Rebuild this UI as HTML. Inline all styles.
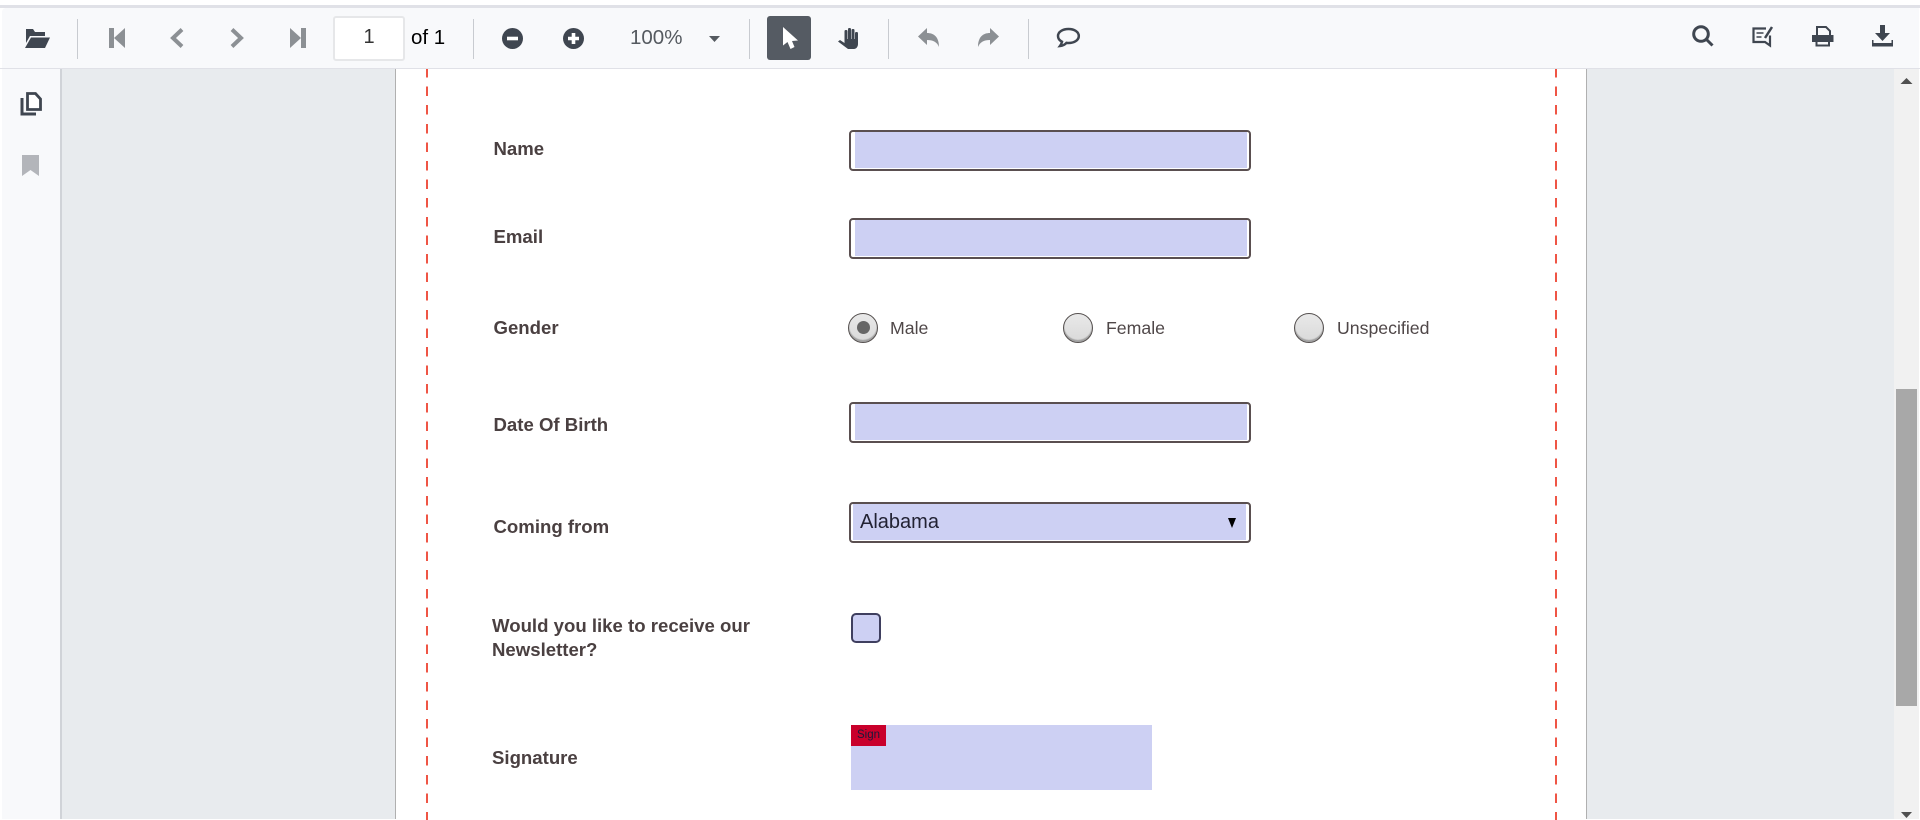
<!DOCTYPE html>
<html><head><meta charset="utf-8"><title>PDF Viewer</title>
<style>
html,body{margin:0;padding:0;width:1920px;height:819px;overflow:hidden;background:#fff;font-family:"Liberation Sans",sans-serif}
.a{position:absolute}
.sep{position:absolute;top:19px;width:1px;height:40px;background:#c8cbd0}
.lb{position:absolute;font-weight:bold;font-size:18.6px;color:#4a4041;line-height:24px;white-space:nowrap}
.rt{position:absolute;font-size:17.700px;color:#4f4748;line-height:20px;white-space:nowrap}
.f{position:absolute;left:849px;width:402px;height:41px;box-sizing:border-box;border:2px solid #5a4f50;border-radius:4px;background:#fff}
.f i{position:absolute;left:4px;right:2px;top:0;bottom:1px;background:#cdd0f3;display:block}
.r{position:absolute;top:313px;width:30px;height:30px;box-sizing:border-box;border-radius:50%;border:1.5px solid #55504f;background:linear-gradient(#e9e9e9,#d9d9d9);box-shadow:inset 0 -2px 1px #a0a0a0}
svg{position:absolute;overflow:visible}
</style></head><body>
<div class="a" style="left:0;top:5px;width:1920px;height:3px;background:#e0e1e7"></div>
<div class="a" style="left:2px;top:8px;width:1917px;height:60px;background:#f8f9fb;border-top-left-radius:4px"></div>
<div class="a" style="left:2px;top:69px;width:58px;height:750px;background:#f8f9fb"></div>
<div class="a" style="left:60px;top:69px;width:2px;height:750px;background:#d0d3d8"></div>
<div class="a" style="left:62px;top:69px;width:1832px;height:750px;background:#e8ebee"></div>
<div class="a" style="left:395px;top:69px;width:1192px;height:750px;background:#fff;border-left:1px solid #b0b0b0;border-right:1px solid #b0b0b0;box-sizing:border-box"></div>
<div class="a" style="left:426px;top:67.500px;width:1.5px;height:752px;background:repeating-linear-gradient(#ef5545 0 9.500px,transparent 9.500px 18.600px)"></div>
<div class="a" style="left:1555px;top:67.500px;width:1.5px;height:752px;background:repeating-linear-gradient(#ef5545 0 9.500px,transparent 9.500px 18.600px)"></div>
<div class="a" style="left:395px;top:66px;width:1192px;height:3px;background:#f8f9fb"></div>
<div class="a" style="left:0;top:68px;width:1920px;height:1px;background:#e0e1e7"></div>
<div class="a" style="left:1894px;top:69px;width:25px;height:750px;background:#f1f1f1"></div>
<div class="a" style="left:1896px;top:389px;width:21px;height:317px;background:#a8a8a8"></div>
<svg style="left:1894px;top:69px" width="25" height="750"><path d="M12.500 9l6 6h-12z" fill="#505050"/><path d="M7 743h11l-5.500 6z" fill="#505050"/></svg>

<div class="sep" style="left:77px"></div><div class="sep" style="left:472.500px;width:1.500px"></div><div class="sep" style="left:748.500px;width:1.500px"></div><div class="sep" style="left:888px"></div><div class="sep" style="left:1027.500px;width:1.500px"></div>

<svg style="left:25px;top:29px" width="25" height="20" fill="#3f4650"><path d="M1 0h7l2 3h10v4H5L1 14z"/><path d="M6 8.500h19L20 19H0z"/></svg>
<svg style="left:109px;top:28px" width="16" height="20" fill="#8c9094"><rect x="0" width="5" height="20"/><path d="M16 0v20L5 10z"/></svg>
<svg style="left:170px;top:28px" width="15" height="20" fill="none" stroke="#8c9094" stroke-width="4"><path d="M12 1.500L3 10l9 8.500"/></svg>
<svg style="left:229px;top:28px" width="15" height="20" fill="none" stroke="#8c9094" stroke-width="4"><path d="M3 1.500L12 10l-9 8.500"/></svg>
<svg style="left:290px;top:28px" width="16" height="20" fill="#8c9094"><rect x="11" width="5" height="20"/><path d="M0 0v20l11-10z"/></svg>
<div class="a" style="left:333px;top:16px;width:72px;height:45px;box-sizing:border-box;background:#fff;border:2px solid #e6e7e9;border-radius:3px;text-align:center;font-size:20px;line-height:39px;color:#333">1</div>
<div class="a" style="left:411px;top:27px;font-size:20.500px;line-height:22px;color:#000">of 1</div>

<svg style="left:502px;top:28px" width="21" height="21"><circle cx="10.500" cy="10.500" r="10.500" fill="#3f4650"/><rect x="5" y="8.700" width="11" height="3.600" fill="#fff"/></svg>
<svg style="left:563px;top:28px" width="21" height="21"><circle cx="10.500" cy="10.500" r="10.500" fill="#3f4650"/><path d="M5 8.700h3.700V5h3.600v3.700H16v3.600h-3.700V16H8.700v-3.700H5z" fill="#fff"/></svg>
<div class="a" style="left:630px;top:27px;font-size:20.500px;line-height:22px;color:#555a60">100%</div>
<svg style="left:709px;top:36px" width="11" height="6"><path d="M0 0h11L5.500 6z" fill="#555a60"/></svg>
<div class="a" style="left:767px;top:16px;width:44px;height:44px;background:#555b63;border-radius:3px"></div>
<svg style="left:781.500px;top:27px" width="17" height="23"><path d="M1 0l15 13.500-6 .5 2.500 6-4 2-3-7-4.500 3.500z" fill="#fff"/></svg>
<svg style="left:838px;top:28px" width="21" height="21" fill="#3f4650"><rect x="6.500" y="2" width="3" height="11" rx="1.200"/><rect x="10" y="0" width="3" height="13" rx="1.200"/><rect x="13.500" y="1" width="3" height="12" rx="1.200"/><rect x="17" y="4" width="3" height="10" rx="1.200"/><path d="M6.500 11H20v5c0 3-2 5-4 5h-6L0 13.500l2-1.500 4.500 3z"/></svg>
<svg style="left:918px;top:28px" width="22" height="20"><path d="M9 0v5c7 0 12 4 12 14-2-5-6-7-12-7v5L0 8.500z" fill="#8c9094"/></svg>
<svg style="left:977px;top:28px" width="22" height="20"><path d="M13 0v5C6 5 1 9 1 19c2-5 6-7 12-7v5l9-8.500z" fill="#8c9094"/></svg>
<svg style="left:1056px;top:27px" width="24" height="22" fill="none" stroke="#3f4650" stroke-width="2.500"><path d="M12.500 2C6.500 2 2 5 2 9c0 2.500 1.500 4.500 4 5.700-.3 1.500-1 3-2 4.300 2.500-.2 5-1.500 6.500-3.200.7.100 1.300.2 2 .2 6 0 10.300-3 10.300-7S18.500 2 12.500 2z"/></svg>

<svg style="left:1692px;top:25px" width="22" height="22" fill="none" stroke="#3f4650" stroke-width="3"><circle cx="9" cy="9" r="7.300"/><path d="M14 14l6.500 6.500"/></svg>
<svg style="left:1752px;top:25px" width="22" height="22" fill="none" stroke="#3f4650" stroke-width="2.200"><path d="M14 3.500H1.500v13.500H13l5 3.500v-10"/><path d="M4.500 8h7M4.500 12h5" stroke-width="1.500"/><path d="M13 13l7-11" stroke-width="2.500"/></svg>
<svg style="left:1812px;top:26px" width="22" height="21" fill="none" stroke="#3f4650" stroke-width="2"><path d="M5 9V1h9l4 4v4"/><path d="M0 9h21.500v7H0z" fill="#3f4650" stroke="none"/><path d="M4.500 14v5.500h12.500V14" /></svg>
<svg style="left:1872px;top:25px" width="21" height="22" fill="#3f4650"><path d="M8 0h5v8h5l-7.500 8L3 8h5z"/><rect x="0" y="18" width="21" height="3.500"/><rect x="0" y="15" width="1.500" height="4"/><rect x="19.500" y="15" width="1.500" height="4"/></svg>

<svg style="left:20px;top:92px" width="22" height="25"><path d="M2 6v16h14" fill="none" stroke="#3f4650" stroke-width="3"/><path d="M7.500 1.500h8l5 5.500v10.500h-13z" fill="#fff" stroke="#3f4650" stroke-width="2.800"/></svg>
<svg style="left:22px;top:155px" width="17" height="21"><path d="M0 0h17v21l-8.500-6L0 21z" fill="#b3b5ba"/></svg>

<div class="lb" style="left:493.500px;top:137px">Name</div>
<div class="lb" style="left:493.500px;top:225px">Email</div>
<div class="lb" style="left:493.500px;top:315.500px">Gender</div>
<div class="lb" style="left:493.500px;top:413px">Date Of Birth</div>
<div class="lb" style="left:493.500px;top:515px">Coming from</div>
<div class="lb" style="left:492px;top:614px">Would you like to receive our<br>Newsletter?</div>
<div class="lb" style="left:492px;top:746px">Signature</div>

<div class="f" style="top:130px"><i></i></div>
<div class="f" style="top:218px"><i></i></div>
<div class="f" style="top:402px"><i></i></div>
<div class="f" style="top:502px"><i style="left:2px;right:3px;top:0;bottom:1px"></i></div>
<div class="a" style="left:860px;top:510px;font-size:20px;line-height:24px;color:#222233">Alabama</div>
<div class="a" style="left:1228px;top:518px;width:0;height:0;border-left:4.500px solid transparent;border-right:4.500px solid transparent;border-top:10px solid #000"></div>

<div class="r" style="left:848px"></div>
<div class="a" style="left:856.500px;top:321px;width:13px;height:13px;border-radius:50%;background:#666"></div>
<div class="r" style="left:1063px"></div>
<div class="r" style="left:1294px"></div>
<div class="rt" style="left:890px;top:317.500px">Male</div>
<div class="rt" style="left:1106px;top:317.500px">Female</div>
<div class="rt" style="left:1337px;top:317.500px">Unspecified</div>

<div class="a" style="left:851px;top:613px;width:30px;height:30px;box-sizing:border-box;background:#cdd0f3;border:2px solid #3f3f5f;border-radius:5px"></div>
<div class="a" style="left:851px;top:725px;width:301px;height:65px;background:#cdd0f3"></div>
<div class="a" style="left:851px;top:725px;width:35px;height:21px;background:#c9002b;font-size:11.500px;line-height:20px;text-align:center;color:#1a1a3a">Sign</div>
</body></html>
